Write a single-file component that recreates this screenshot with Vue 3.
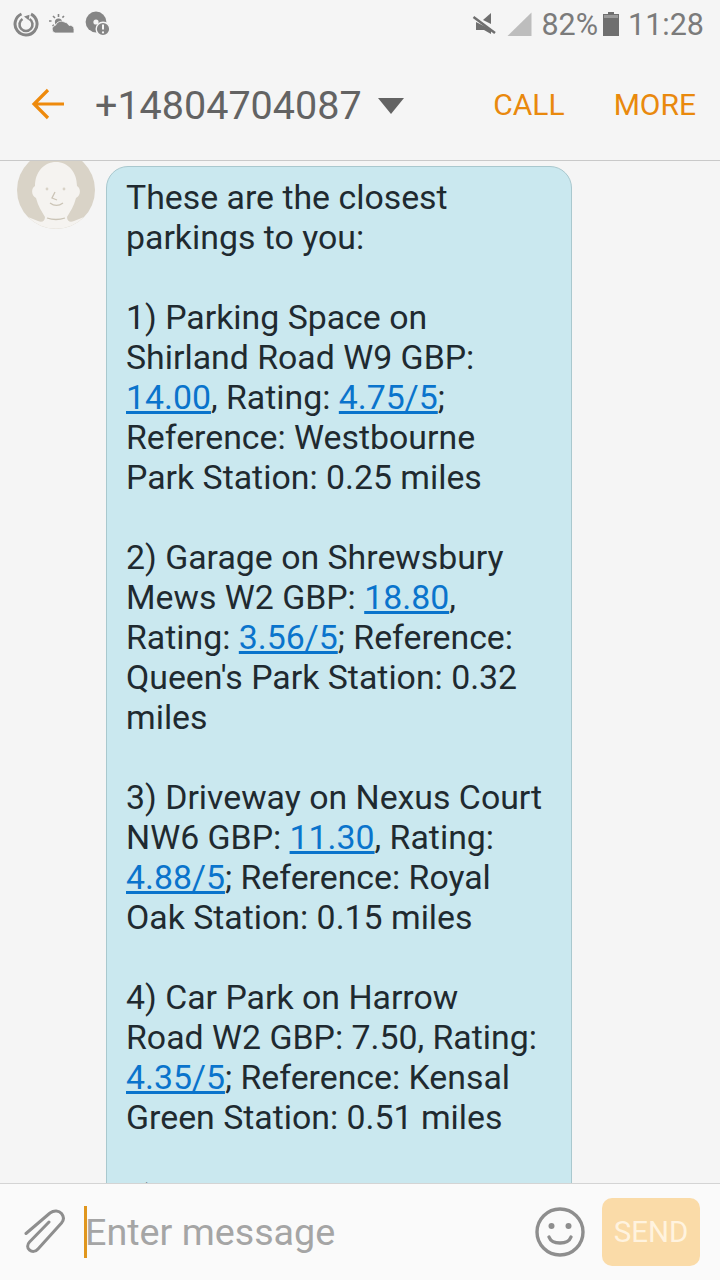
<template>
  <div class="screen">
    <div class="status">
      <div class="status__left">
        <svg width="26" height="26" viewBox="0 0 26 26" fill="none" stroke="#858585">
          <path d="M8.500 3A11 11 0 1 0 18 3.200" stroke-width="3" />
          <path d="M9.500 8A6.500 6.500 0 1 0 16.500 8" stroke-width="2.600" />
          <path d="M11 5.500l5.500-1.800-.8 5.600z" fill="#858585" stroke="none" />
        </svg>
        <svg width="28" height="24" viewBox="0 0 28 24">
          <g stroke="#858585" stroke-width="1.600">
            <path d="M10.500 2v3M3.500 9H1M5 4l2 2M16 4l-1.600 1.600M4.500 14l1.600-1.200" />
          </g>
          <circle cx="10.500" cy="10" r="3.600" fill="#858585" />
          <path d="M7 21a4 4 0 0 1 .6-7.800 6 6 0 0 1 8.800-3.200 5.600 5.600 0 0 1 4.600 3.400 4 4 0 0 1 5 3.800V21z" fill="#858585" stroke="#f5f5f5" stroke-width=".8" />
        </svg>
        <svg width="26" height="26" viewBox="0 0 26 26">
          <circle cx="11" cy="11" r="10.400" fill="#858585" />
          <circle cx="11" cy="11" r="2.600" fill="#f5f5f5" />
          <circle cx="18" cy="18" r="6.800" fill="#858585" stroke="#f5f5f5" stroke-width="1.400" />
          <path d="M18 13.600v5" stroke="#f5f5f5" stroke-width="2" />
          <circle cx="18" cy="21.400" r="1.100" fill="#f5f5f5" />
        </svg>
      </div>
      <div class="status__right">
        <svg class="mute" width="24" height="24" viewBox="0 0 24 24">
          <path d="M11 8l8-7v11z" fill="#6f6f6f" />
          <path d="M4 10v8h8l7 4v-4.500z" fill="#6f6f6f" />
          <path d="M1.500 5L23 21" stroke="#6f6f6f" stroke-width="2.500" />
        </svg>
        <svg class="signal" width="25" height="24" viewBox="0 0 25 24">
          <path d="M24.500 0.500V24H0.500z" fill="#bdbdbd" />
        </svg>
        <span class="status__text">82%</span>
        <svg class="battery" width="16" height="24" viewBox="0 0 16 24">
          <path d="M5 0h6v2h5v22H0V2h5z" fill="#6f6f6f" />
          <path d="M1 3h14v3H1z" fill="#9a9a9a" />
        </svg>
        <span class="status__text">11:28</span>
      </div>
    </div>

    <header class="toolbar">
      <button class="back">
        <svg width="34" height="34" viewBox="0 0 34 34" fill="none" stroke="#ee8a0c" stroke-width="3.200">
          <path d="M33 17H3M17 3L3 17l14 14" />
        </svg>
      </button>
      <span class="contact">+14804704087</span>
      <span class="caret" />
      <span class="action action--call">CALL</span>
      <span class="action">MORE</span>
    </header>

    <main class="thread">
      <div class="msg">
        <div class="avatar">
          <svg width="78" height="78" viewBox="0 0 78 78">
            <circle cx="39" cy="39" r="39" fill="#d9d3c7" />
            <path d="M39 11C51 11 60 21 60 35C64 37 64 45 59 47C57 55 53 61 50 66C50 70 53 72 57 70L67 66A39 39 0 0 1 11 66L21 70C25 72 28 70 28 66C25 61 21 55 19 47C14 45 14 37 18 35C18 21 27 11 39 11z" fill="#f5f3f0" />
            <circle cx="30" cy="38" r="1.400" fill="#d9d3c7" />
            <circle cx="47" cy="38" r="1.400" fill="#d9d3c7" />
            <path d="M38 41l-3 6 5 2M33 52c4 3 9 3 13 0M30 67q9 3 18 0" fill="none" stroke="#cbc4b6" stroke-width="1.300" />
          </svg>
        </div>
        <div class="bubble">
          These are the closest<br>parkings to you:<br><br>
          1) Parking Space on<br>Shirland Road W9 GBP:<br><a>14.00</a>, Rating: <a>4.75/5</a>;<br>Reference: Westbourne<br>Park Station: 0.25 miles<br><br>
          2) Garage on Shrewsbury<br>Mews W2 GBP: <a>18.80</a>,<br>Rating: <a>3.56/5</a>; Reference:<br>Queen's Park Station: 0.32<br>miles<br><br>
          3) Driveway on Nexus Court<br>NW6 GBP: <a>11.30</a>, Rating:<br><a>4.88/5</a>; Reference: Royal<br>Oak Station: 0.15 miles<br><br>
          4) Car Park on Harrow<br>Road W2 GBP: 7.50, Rating:<br><a>4.35/5</a>; Reference: Kensal<br>Green Station: 0.51 miles<br><br>
          5)
        </div>
      </div>
    </main>

    <footer class="composer">
      <svg class="clip" width="44" height="48" viewBox="0 0 44 48" fill="none" stroke="#8e8e8e" stroke-width="3" stroke-linecap="round" stroke-linejoin="round">
        <path d="M3 25.500L27 5C31 2 36 2.500 38.500 5.500C41 8.500 41 12 38.500 15L15 41C12.500 44 9 44 6.500 42C4 40 4 36.500 6.500 34L26 14" />
      </svg>
      <div class="input">
        <span class="cursor" />
        <span class="placeholder">Enter message</span>
      </div>
      <svg class="smile" width="50" height="50" viewBox="0 0 50 50" fill="none" stroke="#8e8e8e" stroke-width="3.400">
        <circle cx="25" cy="25" r="23" />
        <circle cx="16.500" cy="19" r="3" fill="#8e8e8e" stroke="none" />
        <circle cx="33.500" cy="19" r="3" fill="#8e8e8e" stroke="none" />
        <path d="M14 30c3 8 19 8 22 0" stroke-linecap="round" />
      </svg>
      <button class="send">SEND</button>
    </footer>
  </div>
</template>

<script setup>
</script>

<style>
html, body { margin: 0; background: #f5f5f5; }
</style>

<style scoped>
.screen {
  width: 720px;
  height: 1280px;
  display: flex;
  flex-direction: column;
  overflow: hidden;
  background: #f5f5f5;
  font-family: Roboto, "Liberation Sans", sans-serif;
}

.status {
  height: 48px;
  flex: none;
  display: flex;
  align-items: center;
  justify-content: space-between;
  padding: 0 16px 0 13px;
}
.status__left { display: flex; align-items: center; gap: 9px; }
.status__right { display: flex; align-items: center; }
.status__text { font-size: 30.500px; color: #7b7b7b; }
.mute { margin-right: 11px; }
.signal { margin-right: 9px; }
.battery { margin: 0 9px 0 5px; }

.toolbar {
  height: 112px;
  flex: none;
  display: flex;
  align-items: center;
  padding: 0 24px 0 31px;
  border-bottom: 1px solid #c9c9c9;
}
.back {
  padding: 0;
  border: 0;
  background: none;
  display: flex;
  margin-right: 30px;
}
.contact { font-size: 39.500px; color: #636363; margin-top: 2px; }
.caret {
  margin: 4px 0 0 16px;
  border-left: 13px solid transparent;
  border-right: 13px solid transparent;
  border-top: 16px solid #636363;
}
.action { font-size: 30px; color: #e9890d; }
.action--call { margin-left: auto; margin-right: 49px; }

.thread {
  flex: 1;
  min-height: 0;
  overflow: hidden;
  padding: 5px 0 0 17px;
}
.msg { display: flex; align-items: flex-start; }
.avatar {
  width: 78px;
  height: 78px;
  flex: none;
  margin: -15px 11px 0 0;
}
.avatar svg { display: block; }
.bubble {
  width: 466px;
  box-sizing: border-box;
  padding: 11px 10px 40px 19px;
  background: #cae8ef;
  border: 1px solid #a9c8ce;
  border-radius: 22px 22px 0 0;
  font-size: 33.850px;
  line-height: 40px;
  color: #1f2a30;
  white-space: nowrap;
}
.bubble a {
  color: #0a74cc;
  text-decoration: underline;
}

.composer {
  height: 96px;
  flex: none;
  display: flex;
  align-items: center;
  background: #fafafa;
  border-top: 1px solid #d4d4d4;
  padding: 0 20px 0 23px;
}
.clip { flex: none; }
.input {
  flex: 1;
  display: flex;
  align-items: center;
  margin-left: 17px;
}
.cursor {
  width: 3px;
  height: 52px;
  background: #e0961d;
}
.placeholder { font-size: 37.700px; color: #a5a5a5; margin-left: -2px; }
.smile { flex: none; margin-right: 17px; }
.send {
  width: 98px;
  height: 68px;
  padding: 0;
  border: 0;
  border-radius: 10px;
  background: #fadba8;
  color: #fff3df;
  font-family: inherit;
  font-size: 29.500px;
}
</style>
